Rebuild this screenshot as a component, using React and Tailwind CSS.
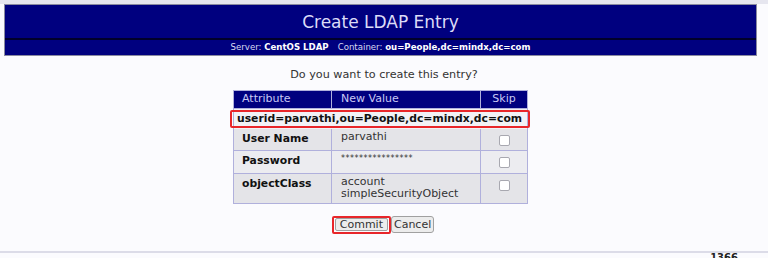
import React from "react";

const rows = [
  { name: "User Name", value: ["parvathi"] },
  { name: "Password", value: ["****************"] },
  { name: "objectClass", value: ["account", "simpleSecurityObject"] },
];

function Checkbox() {
  return (
    <span className="inline-block w-[11px] h-[11px] rounded-[2px] border border-[#a8a8b0] bg-white" />
  );
}

export default function App() {
  return (
    <div
      className="w-[768px] h-[258px] overflow-hidden bg-[#fbfbfe] text-[#222]"
      style={{ fontFamily: '"DejaVu Sans", sans-serif' }}
    >
      {/* top strip */}
      <div className="h-[4px] bg-[#e6e6ef]" />

      {/* HEADER */}
      <div className="mx-[4px] w-[753px] border border-[#8a8aa0] bg-[#00007f]">
        <div className="h-[33px] pt-[2px] flex items-center justify-center text-[17px] text-[#dcdcf8]">
          Create LDAP Entry
        </div>
        <div className="h-[2px] bg-[#00002a]" />
        <div className="h-[15px] flex items-center justify-center text-[8.6px] text-[#d8d8f0]">
          <span>Server:&nbsp;</span>
          <span className="font-bold text-white">CentOS LDAP</span>
          <span className="ml-[9px]">Container:&nbsp;</span>
          <span className="font-bold text-white">ou=People,dc=mindx,dc=com</span>
        </div>
      </div>

      {/* QUESTION */}
      <div className="mt-[11px] text-center text-[11.2px] text-[#333]">
        Do you want to create this entry?
      </div>

      {/* TABLE */}
      <div className="mt-[6px] flex justify-center">
        <div className="w-[295px] ml-[-7px] text-[11px]">
          <div className="flex h-[19px] bg-[#00007f] text-[#c8c8f4] border border-[#b0b0dc]">
            <div className="w-[98px] pl-[8px] flex items-center border-r border-[#b0b0dc]">Attribute</div>
            <div className="w-[149px] pl-[9px] flex items-center border-r border-[#b0b0dc]">New Value</div>
            <div className="flex-1 flex items-center justify-center">Skip</div>
          </div>

          <div className="relative h-[20px] bg-[#f2f2f6] border-x border-[#b0b0dc] flex items-center pl-[3px] font-bold text-[10.8px] text-[#111]">
            userid=parvathi,ou=People,dc=mindx,dc=com
            <div className="absolute left-[-4px] right-[-3px] top-[1px] bottom-[1px] border-2 border-[#e8262a] rounded-[2px]" />
          </div>

          {rows.map((r, i) => (
            <div
              key={r.name}
              className={`flex border border-t-0 border-[#b0b0dc] ${
                i === 2 ? "h-[30px] bg-[#e4e4e8]" : i === 1 ? "h-[23px] bg-[#ececf0]" : "h-[22px] bg-[#e4e4e8]"
              }`}
            >
              <div className="w-[98px] pl-[8px] pt-[2px] font-bold text-[10.8px] text-[#111] border-r border-[#b0b0dc]">
                {r.name}
              </div>
              <div className="w-[149px] pl-[9px] pt-[2px] leading-[12px] text-[#333] border-r border-[#b0b0dc]">
                {r.value.map((v) => (
                  <div key={v} className={r.name === "Password" ? "text-[8px] tracking-[0.5px]" : ""}>{v}</div>
                ))}
              </div>
              <div className="flex-1 flex justify-center pt-[6px]">
                <Checkbox />
              </div>
            </div>
          ))}
        </div>
      </div>

      {/* BUTTONS */}
      <div className="mt-[12px] flex items-center justify-center ml-[-2px]">
        <div className="h-[18px] flex items-center border-2 border-[#e8262a] rounded-[2px] px-[1px]">
          <button className="h-[13px] px-[4px] flex items-center text-[11px] text-[#333] bg-[#ececec] border border-[#a0a0a0] rounded-[2px]">
            Commit
          </button>
        </div>
        <button className="h-[17px] px-[2px] flex items-center text-[11px] text-[#333] bg-[#ececec] border border-[#a0a0a0] rounded-[3px]">
          Cancel
        </button>
      </div>

      {/* FOOTER */}
      <div className="mt-[17px] h-[2px] bg-[#dcdce8]" />
      <div className="flex justify-end pr-[30px]">
        <span className="text-[10px] font-bold leading-[7px] mt-[1px] text-[#222]">1366</span>
      </div>
    </div>
  );
}
